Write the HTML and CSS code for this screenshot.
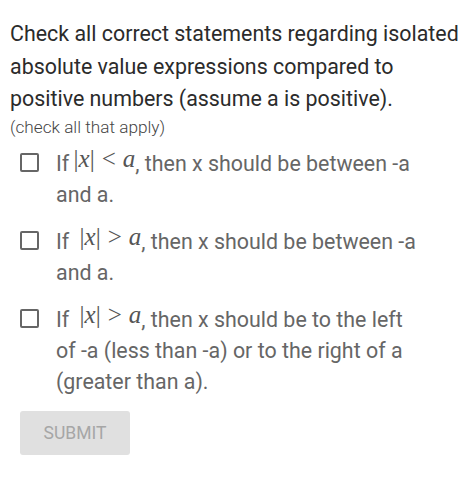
FILE: index.html
```html
<!DOCTYPE html>
<html lang="en">
<head>
    <meta charset="UTF-8">
    <meta name="viewport" content="width=device-width, initial-scale=1.0">
    <title>Question</title>
    <link rel="stylesheet" href="styles.css">
</head>
<body>
    <div class="question">
        <p class="prompt">Check all correct statements regarding isolated absolute value expressions compared to positive numbers (assume a is positive).</p>
        <p class="hint">(check all that apply)</p>

        <ul class="options">
            <li class="option">
                <span class="box"></span>
                <span class="label">If <span class="math"><span class="bar">|</span><i>x</i><span class="bar">|</span><span class="op">&lt;</span><i>a</i></span>, then x should be between <span class="nw">-a</span> and a.</span>
            </li>
            <li class="option">
                <span class="box"></span>
                <span class="label">If <span class="math wide"><span class="bar">|</span><i>x</i><span class="bar">|</span><span class="op">&gt;</span><i>a</i></span>, then x should be between <span class="nw">-a</span> and a.</span>
            </li>
            <li class="option">
                <span class="box"></span>
                <span class="label">If <span class="math wide"><span class="bar">|</span><i>x</i><span class="bar">|</span><span class="op">&gt;</span><i>a</i></span>, then x should be to the left of <span class="nw">-a</span> (less than <span class="nw">-a)</span> or to the right of a (greater than a).</span>
            </li>
        </ul>

        <button class="submit">SUBMIT</button>
    </div>
</body>
</html>
```

FILE: styles.css
```css
*{
    margin: 0;
    padding: 0;
    box-sizing: border-box;
    list-style: none;
}

body{
    font-family: Roboto, "Liberation Sans", sans-serif;
    background: #fff;
}

.question{
    padding: 18px 4px 10px 10px;
}

.prompt{
    font-size: 21.4px;
    line-height: 32.5px;
    color: #2b2b2b;
}

.hint{
    font-size: 17.2px;
    font-weight: 300;
    color: #444;
    line-height: 22px;
}

.options{
    margin-top: 9px;
    padding-left: 10px;
    width: 414px;
}

.option{
    display: flex;
    align-items: flex-start;
    margin-bottom: 15px;
}

.box{
    flex: none;
    width: 19px;
    height: 19px;
    border: 2px solid #666;
    border-radius: 2px;
    margin-top: 6px;
    margin-right: 17px;
}

.label{
    font-size: 21.4px;
    line-height: 31px;
    color: #666;
}

.nw{
    white-space: nowrap;
}

.math{
    font-family: "Liberation Serif", serif;
    font-size: 25px;
    color: #555;
    position: relative;
    top: -4px;
    margin-left: -1px;
}

.math.wide{
    margin-left: 5px;
}

.math i{
    font-style: italic;
}

.op{
    margin: 0 7px;
}

.submit{
    margin-top: -1px;
    margin-left: 10px;
    width: 110px;
    height: 44px;
    border: none;
    border-radius: 3px;
    background: #e0e0e0;
    color: #a6a6a6;
    font-family: Roboto, sans-serif;
    font-size: 17.5px;
}
```
